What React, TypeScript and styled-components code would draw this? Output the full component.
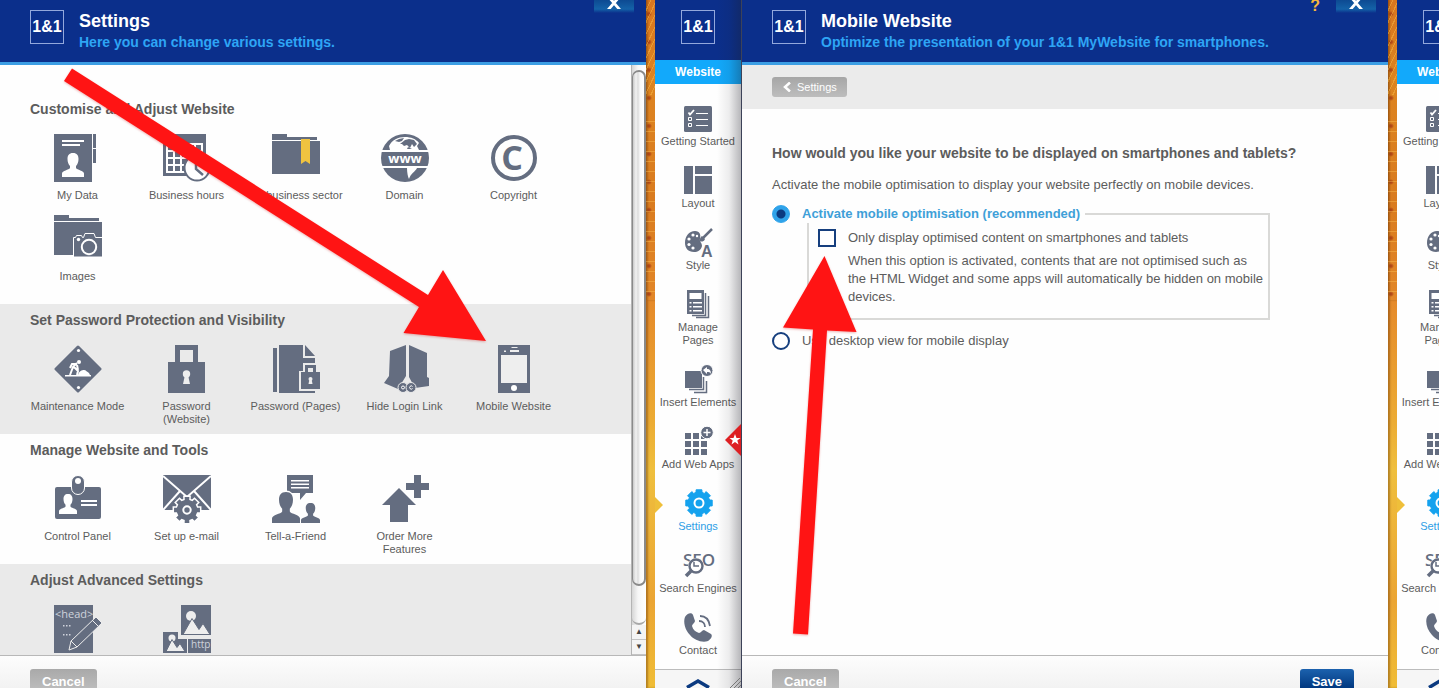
import React, { useState } from "react";
import styled, { createGlobalStyle } from "styled-components";

const navy = "#0b2f8b";
const slate = "#646d80";
const sky = "#2f9fe6";
const ink = "#5c5c5c";

const GlobalStyle = createGlobalStyle`
  *, *::before, *::after { box-sizing: border-box; }
  body {
    margin: 0;
    overflow: hidden;
    background: #ffffff;
    color: ${ink};
    font-family: "Liberation Sans", Arial, Helvetica, sans-serif;
    font-size: 13px;
  }
  button { font-family: inherit; border: 0; cursor: pointer; }
  h1, h2, p, ul { margin: 0; padding: 0; }
`;

/* ---------- page frame ---------- */

const Desktop = styled.div`
  display: flex;
  height: 100vh;
  overflow: hidden;
`;

const Panel = styled.section<{ $edge?: boolean }>`
  position: relative;
  display: flex;
  flex: 1 1 0;
  flex-direction: column;
  min-width: 0;
  border-left: ${(p) => (p.$edge ? "1px solid #3c4258" : "0")};
  background: #fefefe;
`;

const WoodStrip = styled.div`
  position: relative;
  z-index: 1;
  flex: none;
  width: 9px;
  background:
    linear-gradient(to right, rgba(90, 40, 0, 0.5), rgba(90, 40, 0, 0) 3px),
    radial-gradient(circle at 3px 50%, rgba(170, 60, 20, 0.8) 1px, transparent 3px),
    linear-gradient(#d9761f 0, #dd8420 80px, #d97b1f 200px, #e58a2a 330px, #ecab33 420px, #efbf3d 470px, #eba533 600px, #f0bd35 100%);
  background-size: 100% 100%, 9px 28px, 100% 100%;
  background-repeat: no-repeat, repeat-y, no-repeat;

  &::before {
    content: "";
    position: absolute;
    inset: 0 0 auto;
    height: 95px;
    background: repeating-linear-gradient(115deg, transparent 0 4px, rgba(255, 200, 80, 0.4) 4px 5px);
  }
  &::after {
    content: "";
    position: absolute;
    inset: 300px 0 0;
    background: linear-gradient(#e58a2a, #ecab33 120px, #efbf3d 170px, #eba533 300px, #f0bd35 100%);
    box-shadow: inset 2px 0 2px rgba(90, 40, 0, 0.4);
  }
`;

const StripLines = styled.div`
  position: absolute;
  inset: 112px 0 auto;
  height: 190px;
  background: repeating-linear-gradient(transparent 0 9px, rgba(255, 200, 90, 0.4) 9px 10px);
`;

/* ---------- header ---------- */

const Header = styled.header`
  display: flex;
  flex: none;
  align-items: flex-start;
  gap: 15px;
  height: 65px;
  padding: 10px 12px 0 30px;
  border-bottom: 3px solid #3c9ee4;
  background: ${navy};
`;

const Titles = styled.div`
  flex: 1;
  min-width: 0;
  white-space: nowrap;
`;

const Title = styled.h1`
  font-size: 18px;
  line-height: 22px;
  color: #ffffff;
`;

const Subtitle = styled.p`
  font-size: 14px;
  font-weight: bold;
  line-height: 20px;
  color: #2ea5f5;
`;

const HeaderTools = styled.div`
  display: flex;
  gap: 16px;
  margin-top: -10px;
`;

const HelpButton = styled.button`
  height: 12px;
  padding: 0;
  background: none;
  color: #f5b83d;
  font-size: 16px;
  font-weight: bold;
  line-height: 8px;
`;

const CloseButton = styled.button`
  display: flex;
  justify-content: center;
  width: 40px;
  height: 13px;
  padding: 0;
  background: linear-gradient(#0d4a92, #1462a8 70%, ${navy});
`;

const LogoBox = styled.div`
  display: flex;
  flex: none;
  align-items: center;
  justify-content: center;
  width: 34px;
  height: 34px;
  border: 1px solid #93a8dc;
  color: #ffffff;
  font-size: 16px;
  font-weight: bold;
  line-height: 32px;
`;

const Logo = () => <LogoBox>1&amp;1</LogoBox>;

const CloseGlyph = () => (
  <svg width="14" height="9" viewBox="0 0 14 9" aria-hidden="true">
    <path d="M1-4L13 10M13-4L1 10" stroke="#fff" strokeWidth="2.800" />
  </svg>
);

/* ---------- settings list ---------- */

const ScrollRow = styled.div`
  display: flex;
  flex: 1;
  min-height: 0;
`;

const Sections = styled.div`
  flex: 1;
  min-width: 0;
  overflow: hidden;
`;

const Section = styled.section<{ $shaded?: boolean; $first?: boolean }>`
  padding: ${(p) => (p.$first ? 36 : 8)}px 23px 8px;
  background: ${(p) => (p.$shaded ? "#eaeaea" : "#fefefe")};
`;

const SectionTitle = styled.h2`
  padding-left: 7px;
  font-size: 14px;
  line-height: 16px;
`;

const IconGrid = styled.div`
  display: grid;
  grid-template-columns: repeat(5, 109px);
  margin-top: 17px;
`;

const Tile = styled.button`
  display: flex;
  flex-direction: column;
  align-items: center;
  gap: 7px;
  padding: 0 6px;
  background: none;
  color: ${slate};
`;

const TileLabel = styled.span`
  min-height: 26px;
  color: ${ink};
  font-size: 11px;
  line-height: 13px;
`;

const Scrollbar = styled.div`
  display: flex;
  flex: none;
  flex-direction: column;
  width: 15px;
  padding-top: 5px;
  border-left: 1px solid #b4b4b4;
  background: linear-gradient(to right, #d6d6d6, #f6f6f6 6px, #ffffff);
`;

const Thumb = styled.div`
  flex: 1;
  border: 1px solid #8a8a8a;
  border-width: 2px 2px 2px 1px;
  border-radius: 7px;
  background: linear-gradient(to right, #c9c9c9, #f2f2f2 3px, #dcdcdc 5px, #f8f8f8 7px, #ffffff);
`;

const Track = styled.div`
  height: 39px;
  border-bottom: 2px solid #a8a8a8;
  border-radius: 0 0 7px 7px;
`;

const StepButton = styled.button`
  height: 15px;
  padding: 0;
  border-bottom: 1px solid #c4c4c4;
  background: #f4f4f4;
  color: #444444;
  font-size: 8px;
  line-height: 14px;
`;

const Footer = styled.footer`
  display: flex;
  flex: none;
  align-items: flex-start;
  justify-content: space-between;
  height: 33px;
  padding: 13px 34px 0 30px;
  border-top: 1px solid #b8b8b8;
  background: linear-gradient(#fdfdfd, #f2f2f2);
  overflow: hidden;
`;

const ActionButton = styled.button<{ $primary?: boolean }>`
  flex: none;
  height: 26px;
  padding: 0 12px;
  border-radius: 3px;
  background: ${(p) => (p.$primary ? "linear-gradient(#1c62ae, #023a82 70%)" : "linear-gradient(#a9a9a9, #c2c2c2)")};
  color: #ffffff;
  font-size: 13px;
  font-weight: bold;
  line-height: 24px;
`;

/* ---------- side rail ---------- */

const RailWindow = styled.div<{ $width: number }>`
  flex: none;
  width: ${(p) => p.$width}px;
  overflow: hidden;
`;

const Rail = styled.nav`
  position: relative;
  display: flex;
  flex-direction: column;
  width: 86px;
  height: 100%;
  background: #fefefe;

  &::after {
    content: "";
    position: absolute;
    inset: 0 0 0 auto;
    width: 24px;
    background: linear-gradient(to right, rgba(30, 30, 40, 0), rgba(30, 30, 40, 0.08) 50%, rgba(30, 30, 40, 0.32));
    pointer-events: none;
  }
`;

const RailHead = styled.div`
  display: flex;
  flex: none;
  justify-content: center;
  height: 60px;
  padding-top: 10px;
  background: ${navy};
`;

const RailBand = styled.div`
  flex: none;
  background: #12a9fb;
  color: #ffffff;
  font-size: 12px;
  font-weight: bold;
  line-height: 24px;
  text-align: center;
`;

const RailList = styled.ul`
  display: flex;
  flex: 1;
  flex-direction: column;
  gap: 18px;
  min-height: 0;
  padding-top: 20px;
  list-style: none;
`;

const RailItem = styled.li`
  position: relative;
`;

const RailLink = styled.a<{ $active?: boolean }>`
  display: flex;
  flex-direction: column;
  align-items: center;
  gap: 3px;
  color: ${(p) => (p.$active ? "#14a2ee" : slate)};
  text-decoration: none;
`;

const RailLabel = styled.span<{ $active?: boolean }>`
  color: ${(p) => (p.$active ? sky : ink)};
  font-size: 11px;
  line-height: 13px;
  text-align: center;
  white-space: pre-line;
`;

const ActiveNotch = styled.div`
  position: absolute;
  top: 8px;
  left: 0;
  border: solid transparent;
  border-width: 8px 0 8px 8px;
  border-left-color: #efbf3a;
`;

const NewRibbon = styled.svg`
  position: absolute;
  top: -3px;
  right: 0;
  z-index: 1;
`;

const RailFoot = styled.div`
  display: flex;
  flex: none;
  justify-content: center;
  height: 19px;
  padding-top: 8px;
  border-top: 1px solid #bcbcbc;
  background: #f6f6f6;
`;

const ResizeGrip = styled.svg`
  position: absolute;
  right: 0;
  bottom: 0;
  z-index: 1;
`;

/* ---------- mobile website form ---------- */

const Toolbar = styled.div`
  flex: none;
  padding: 12px 30px;
  background: #ebebeb;
`;

const BackButton = styled.button`
  display: flex;
  align-items: center;
  gap: 6px;
  height: 20px;
  padding: 0 10px 0 11px;
  border-radius: 3px;
  background: linear-gradient(#a6a6a6, #bdbdbd);
  color: #ffffff;
  font-size: 11px;
`;

const Form = styled.form`
  flex: 1;
  min-height: 0;
  padding: 36px 30px 0;
  line-height: 18px;
`;

const Question = styled.h2`
  font-size: 14px;
  line-height: 16px;
`;

const Intro = styled.p`
  margin: 15px 0 11px;
`;

const OptionGroup = styled.fieldset`
  max-width: 463px;
  margin: 0 0 12px 35px;
  padding: 6px 2px 12px 9px;
  border: 2px solid #d9d9d7;
`;

const Legend = styled.legend`
  margin-left: -46px;
  padding: 0 5px 0 0;
`;

const OptionLabel = styled.label<{ $highlight?: boolean }>`
  display: flex;
  align-items: center;
  gap: 12px;
  color: ${(p) => (p.$highlight ? "#3fa0d8" : ink)};
  font-weight: ${(p) => (p.$highlight ? "bold" : "normal")};
`;

const Radio = styled.input`
  flex: none;
  width: 18px;
  height: 18px;
  margin: 0;
  appearance: none;
  border: 2px solid #163f7e;
  border-radius: 50%;
  background: #ffffff;

  &:checked {
    border: 1px solid #2fa3ea;
    background: radial-gradient(circle, #0b3a80 4px, #2fa3ea 5px);
  }
`;

const Checkbox = styled.input`
  flex: none;
  width: 18px;
  height: 18px;
  margin: 0;
  appearance: none;
  border: 2px solid #163f7e;
  background: #ffffff;

  &:checked {
    background: #163f7e;
    box-shadow: inset 0 0 0 3px #ffffff;
  }
`;

const OptionHint = styled.p`
  padding: 5px 0 0 30px;
`;

const Pointer = styled.svg`
  position: absolute;
  top: 0;
  left: 0;
  z-index: 2;
  pointer-events: none;
  filter: drop-shadow(0 1px 1px rgba(200, 0, 0, 0.3));
`;

/* ---------- icons, 48px ---------- */

const gear = (cx: number, cy: number, outer: number, inner: number) => {
  const points: string[] = [];
  for (let i = 0; i < 8; i++) {
    const a = (i * Math.PI) / 4 - Math.PI / 2;
    [[-0.28, inner], [-0.22, outer], [0.22, outer], [0.28, inner]].forEach(([d, r]) =>
      points.push(`${(cx + r * Math.cos(a + d)).toFixed(1)} ${(cy + r * Math.sin(a + d)).toFixed(1)}`)
    );
  }
  return `M${points.join("L")}Z`;
};

const bust = (x: number, y: number, w: number, h: number, fill: string, stroke = "none") => (
  <svg x={x} y={y} width={w} height={h} viewBox="0 0 22 24" preserveAspectRatio="none" overflow="visible">
    <path
      d="M11 0c4 0 5.500 2.500 5.500 6 0 3-1 5.500-2.500 7v2c1 2 8 2.500 8 5.500V24H0v-3.500C0 17.500 7 17 8 15v-2C6.500 11.500 5.500 9 5.500 6 5.500 2.500 7 0 11 0z"
      fill={fill}
      stroke={stroke}
    />
  </svg>
);

const folder = (
  <path fill="currentColor" d="M0 0h15v3h30v3H0zM0 7h48v33H0z" />
);

const tileIcons: Record<string, React.ReactNode> = {
  data: (
    <>
      <path fill="currentColor" d="M0 0h38v48H0zM39 0h3v14h-3zM39 15h3v14h-3z" />
      <path fill="#fff" d="M8 6h22v2H8zM8 10h18v2H8z" />
      {bust(8, 19, 22, 24, "#fff")}
    </>
  ),
  hours: (
    <>
      <path fill="currentColor" d="M0 0h43v42H0z" />
      <path fill="#fff" d="M3 9h37v30H3z" />
      {[11, 18, 25, 32].map((y) =>
        [5, 12, 19, 26, 33].map((x) => <rect key={`${x}-${y}`} x={x} y={y} width="5" height="5" fill="currentColor" />)
      )}
      <circle cx="34" cy="34" r="12.500" fill="#fff" stroke="currentColor" strokeWidth="2" />
      <path d="M33 25v10l7 6" fill="none" stroke="currentColor" strokeWidth="2.500" />
    </>
  ),
  sector: (
    <>
      {folder}
      <path fill="#f0c340" d="M29 5h9v25l-4.500-3-4.500 3z" />
    </>
  ),
  images: (
    <>
      {folder}
      <path
        fill="currentColor"
        stroke="#fff"
        d="M19.500 42V22.500h2l1-2h5l1 2h1l1.500-4h9l1.500 4h7V42z"
      />
      <circle cx="35" cy="32" r="7.200" fill="none" stroke="#fff" strokeWidth="2" />
      <circle cx="24.500" cy="24.500" r="1.700" fill="#fff" />
    </>
  ),
  domain: (
    <>
      <circle cx="24" cy="24" r="24" fill="currentColor" />
      <path fill="#fff" d="M8 12C11 6 17 3 24 3c6 0 11 2 14 6l-2 3 2 4H9z" />
      <path
        fill="currentColor"
        d="M14 7l4-2 5-1-2 3-3 1zM19 10l5-4 4-1 5 1 3 4-3 3-2-3-2 4-3-3-3 1-2-2zM27 13l4 2h-5z"
      />
      <path fill="#fff" d="M0 16h48v2H0zM0 32h48v2H0z" />
      <path fill="#fff" d="M26 34h10c-2 4-6 5-8 11-1-2-2-6-2-11z" />
      <text x="24" y="29" textAnchor="middle" fill="#fff" fontFamily="Open Sans" fontWeight="bold" fontSize="13">
        www
      </text>
    </>
  ),
  copyright: (
    <>
      <circle cx="24" cy="24" r="21" fill="none" stroke="currentColor" strokeWidth="4" />
      <text x="22" y="36" textAnchor="middle" fill="currentColor" fontFamily="Open Sans" fontWeight="bold" fontSize="34">
        C
      </text>
    </>
  ),
  maintenance: (
    <>
      <path fill="currentColor" stroke="currentColor" strokeWidth="3" strokeLinejoin="round" d="M24 2l22 22-22 22L2 24z" />
      <circle cx="24.500" cy="5.500" r="1.600" fill="#fff" />
      <circle cx="24.500" cy="42.500" r="1.600" fill="#fff" />
      <path fill="#fff" d="M11 30h26v1.500H11zM24 30c1-4 4-5 6-5s3 2 5 3l1 2z" />
      <circle cx="25" cy="17" r="2" fill="#fff" />
      <path d="M23 18l-4 4-3 8M20 22l4 4-1 4M23 19l-5 0-2 4M23 20l1 5" stroke="#fff" strokeWidth="2" fill="none" />
    </>
  ),
  lock: (
    <>
      <path fill="currentColor" fillRule="evenodd" d="M12 0h23v17h7v31H5V17h7zM17 5v12h13V5z" />
      <circle cx="23.500" cy="29" r="3.700" fill="#eee" />
      <path fill="#eee" d="M22 30h3l2 9h-7z" />
    </>
  ),
  pages: (
    <>
      <path fill="currentColor" d="M1 3h4v44H1zM7 0h24v13h12v35H7zM33 0l10 11H33z" />
      <path fill="#eaeaea" d="M31 18h14v8h4v20H27V26h4z" />
      <path fill="currentColor" fillRule="evenodd" d="M33 20h11v7h4v17H29V27h4zM36 23v4h5v-4z" />
      <circle cx="38.500" cy="34" r="2" fill="#eee" />
      <path fill="#eee" d="M37.500 34h2l1 5h-4z" />
    </>
  ),
  hidden: (
    <>
      <path fill="currentColor" d="M25 0L9 6 8 31l-5 7 14 6 8-13zM28 0l18 8v24l2 1v8l-14 2-6-11z" />
      <circle cx="22" cy="42.500" r="5" fill="currentColor" stroke="#eaeaea" />
      <circle cx="30" cy="42.500" r="5" fill="currentColor" stroke="#eaeaea" />
      <circle cx="22" cy="42.500" r="1.500" fill="none" stroke="#fff" />
      <path d="M31.500 41.500a1.600 1.600 0 1 0 0 2" fill="none" stroke="#fff" />
    </>
  ),
  mobile: (
    <>
      <path fill="currentColor" d="M8 0h32v48H8z" />
      <path fill="#eee" d="M11 10h26v28H11zM20 5h9v2h-9zM21.500 2h6v1h-6zM14 5.500h2v1.500h-2z" />
      <circle cx="24" cy="43" r="3" fill="#fff" />
    </>
  ),
  panel: (
    <>
      <rect x="1" y="12" width="46" height="32" rx="2" fill="currentColor" />
      <rect x="17.500" y="0.500" width="13" height="19" rx="6.500" fill="currentColor" stroke="#fff" />
      <circle cx="24" cy="6" r="3" fill="#fff" />
      {bust(5, 19, 18, 20, "#fff")}
      <path fill="#fff" d="M27 25h16v2H27zM27 29h16v2H27z" />
    </>
  ),
  email: (
    <>
      <path fill="currentColor" d="M0 0h48v35H0z" />
      <path d="M0 1l24 21L48 1M0 35l17-19M48 35L31 16" fill="none" stroke="#fff" strokeWidth="2" />
      <path d={gear(24, 35, 14, 11)} fill="currentColor" stroke="#fff" strokeWidth="1.500" />
      <circle cx="24" cy="35" r="3.700" fill="none" stroke="#fff" strokeWidth="2" />
    </>
  ),
  friend: (
    <>
      <path fill="currentColor" d="M15 0h26v18h-7l-6 7v-7H15z" />
      <path fill="#fff" d="M19 5h18v1.500H19zM19 8.500h18V10H19zM19 12h18v1.500H19z" />
      <circle cx="14" cy="24" r="8.500" fill="#fff" />
      {bust(0, 17, 28, 31, "currentColor")}
      {bust(29, 28, 19, 20, "currentColor")}
    </>
  ),
  order: <path fill="currentColor" d="M18 13l17 17h-8v17H9V30H1zM33 0h7v8h8v7h-8v8h-7v-8h-8V8h8z" />,
  head: (
    <>
      <path fill="currentColor" d="M0 0h39v48H0z" />
      <text x="1" y="13" fill="#cfd3dc" fontFamily="Open Sans" fontSize="11">
        &lt;head&gt;
      </text>
      <path fill="#cfd3dc" d="M9 20h1.500v1.500H9zM12 20h1.500v1.500H12zM15 20h1.500v1.500H15zM9 29h1.500v1.500H9zM12 29h1.500v1.500H12zM15 29h1.500v1.500H15z" />
      <path fill="currentColor" stroke="#eee" d="M42 12l6 6-25 24-8 3 2-9z" />
      <path stroke="#eee" d="M17 36l6 6M38 15l6 6" />
    </>
  ),
  links: (
    <>
      <path fill="currentColor" d="M18 0h30v30H18zM0 27h15v21H0zM25 34h23v14H25zM15 34h9v14h-9z" />
      <path stroke="#eee" d="M24.500 34v14" />
      <circle cx="28" cy="11" r="5" fill="#eee" />
      <path fill="#eee" stroke="currentColor" d="M20 29.500l9-16 7 11 4-6 7 11z" />
      <circle cx="9" cy="33" r="3.500" fill="#eee" />
      <path fill="#eee" stroke="currentColor" d="M3 46.500l6-12 5 8 3-4 5 8z" />
      <text x="28" y="43" fill="#cfd3dc" fontFamily="Open Sans" fontSize="10">
        http:
      </text>
    </>
  ),
};

const TileIcon = ({ name }: { name: string }) => (
  <svg width="48" height="48" viewBox="0 0 48 48" aria-hidden="true">
    {tileIcons[name]}
  </svg>
);

/* ---------- icons, 28px ---------- */

const railIcons: Record<string, React.ReactNode> = {
  started: (
    <>
      <rect y="2" width="28" height="26" rx="1.500" fill="currentColor" />
      <path d="M4.500 8.500l1.500 2 4-4.500" fill="none" stroke="#fff" strokeWidth="1.800" />
      <path d="M4.500 13.500h3v3h-3zM4.500 19.500h3v3h-3zM12 9.500h12M12 15.500h12M12 21.500h12" fill="none" stroke="#fff" />
    </>
  ),
  layout: <path fill="currentColor" d="M0 0h9v28H0zM11 0h17v8H11zM11 10h17v18H11z" />,
  style: (
    <>
      <path fill="currentColor" d="M11 3c5 0 6 4 5 8-1 3 2 3 2 7-1 4-4 6-8 6C4 24 1 20 1 15 1 8 5 3 11 3z" />
      <g fill="#fff">
        <circle cx="9" cy="7" r="1.600" />
        <circle cx="5" cy="11" r="1.600" />
        <circle cx="5" cy="16.500" r="1.600" />
        <circle cx="9" cy="20" r="1.600" />
        <circle cx="13" cy="8" r="1.200" />
      </g>
      <path stroke="#fff" strokeWidth="5" d="M28 1L18 11" />
      <path stroke="currentColor" strokeWidth="2.500" d="M28 1l-9 9" />
      <path fill="currentColor" d="M18 8l3 3c-1 3-4 3-6 2 1-1 1-4 3-5z" />
      <text x="17" y="29" fill="currentColor" fontFamily="Liberation Sans" fontWeight="bold" fontSize="16">
        A
      </text>
    </>
  ),
  manage: (
    <>
      <path fill="currentColor" d="M3 0h17v24H3z" />
      <path fill="#fff" d="M5.500 3h12v6h-12zM5.500 12h2v1.500h-2zM9 12h9v1.500H9zM5.500 16h2v1.500h-2zM9 16h9v1.500H9zM5.500 20h2v1.500h-2zM9 20h9v1.500H9z" />
      <path d="M8 25.500h13.500V3M12 27.500h12.500V6" fill="none" stroke="currentColor" strokeWidth="1.500" />
    </>
  ),
  insert: (
    <>
      <path fill="currentColor" d="M1 6h17v17H1z" />
      <path d="M5 24.500h14.500V12M10 27.500h12.500V16" fill="none" stroke="currentColor" strokeWidth="1.500" />
      <circle cx="23" cy="5.500" r="6" fill="currentColor" stroke="#fff" />
      <path fill="#fff" d="M19 5l4-3v2c3 0 4 2 4 5-1-2-2-2-4-2v2z" />
    </>
  ),
  apps: (
    <>
      {[6, 14, 22].map((y) =>
        [1, 9, 17].map((x) => <rect key={`${x}-${y}`} x={x} y={y} width="6" height="6" fill="currentColor" />)
      )}
      <circle cx="23" cy="5.500" r="6.300" fill="currentColor" stroke="#fff" />
      <path stroke="#fff" strokeWidth="1.500" d="M19.500 5.500h7M23 2v7" />
    </>
  ),
  settings: (
    <>
      <path d={gear(15, 14, 13.5, 11)} fill="currentColor" stroke="currentColor" strokeLinejoin="round" />
      <circle cx="15" cy="14" r="4.500" fill="none" stroke="#fff" strokeWidth="2" />
    </>
  ),
  seo: (
    <>
      <text x="-1" y="15" fill="currentColor" fontFamily="Open Sans" fontWeight="600" fontSize="17">
        SEO
      </text>
      <circle cx="12" cy="15" r="8" fill="#fff" />
      <path stroke="#fff" strokeWidth="5" d="M8 19l-6 6" />
      <circle cx="12" cy="15" r="6.500" fill="none" stroke="currentColor" strokeWidth="2.400" />
      <path stroke="currentColor" strokeWidth="3.500" d="M8 19l-6 6" />
      <path stroke="currentColor" strokeWidth="1.500" fill="none" d="M10 11v4h5" />
    </>
  ),
  contact: (
    <>
      <path
        fill="currentColor"
        d="M1 4C3 0 8-1 9 2l2 6c0 2-3 3-3 5 1 4 4 6 7 7 2 0 3-3 5-3l7 4c2 2 0 5-3 7-6 2-14-1-18-6C1 17-1 9 1 4z"
      />
      <path d="M15 8c4 0 6 3 6 6M16 3c6 0 9 4 10 10" fill="none" stroke="currentColor" strokeWidth="1.800" />
    </>
  ),
};

const RailIcon = ({ name }: { name: string }) => (
  <svg width="28" height="28" viewBox="0 0 28 28" overflow="visible" aria-hidden="true">
    {railIcons[name]}
  </svg>
);

/* ---------- content ---------- */

const sections = [
  {
    title: "Customise and Adjust Website",
    tiles: [
      ["data", "My Data"],
      ["hours", "Business hours"],
      ["sector", "My business sector"],
      ["domain", "Domain"],
      ["copyright", "Copyright"],
      ["images", "Images"],
    ],
  },
  {
    title: "Set Password Protection and Visibility",
    tiles: [
      ["maintenance", "Maintenance Mode"],
      ["lock", "Password (Website)"],
      ["pages", "Password (Pages)"],
      ["hidden", "Hide Login Link"],
      ["mobile", "Mobile Website"],
    ],
  },
  {
    title: "Manage Website and Tools",
    tiles: [
      ["panel", "Control Panel"],
      ["email", "Set up e-mail"],
      ["friend", "Tell-a-Friend"],
      ["order", "Order More Features"],
    ],
  },
  {
    title: "Adjust Advanced Settings",
    tiles: [
      ["head", ""],
      ["links", ""],
    ],
  },
];

const railItems = [
  ["started", "Getting Started"],
  ["layout", "Layout"],
  ["style", "Style"],
  ["manage", "Manage\nPages"],
  ["insert", "Insert Elements"],
  ["apps", "Add Web Apps"],
  ["settings", "Settings"],
  ["seo", "Search Engines"],
  ["contact", "Contact"],
];

const SideRail = ({ width }: { width: number }) => (
  <RailWindow $width={width}>
    <Rail>
      <RailHead>
        <Logo />
      </RailHead>
      <RailBand>Website</RailBand>
      <RailList>
        {railItems.map(([icon, label]) => {
          const active = icon === "settings";
          return (
            <RailItem key={icon}>
              {active && <ActiveNotch />}
              <RailLink href={`#${icon}`} $active={active}>
                <RailIcon name={icon} />
                <RailLabel $active={active}>{label}</RailLabel>
              </RailLink>
              {icon === "apps" && (
                <NewRibbon width="16" height="32" viewBox="0 0 16 32" aria-hidden="true">
                  <path fill="#dd1f22" d="M16 0v32L0 16z" />
                  <path fill="#fff" d="M10 10l1.500 4h4l-3.200 2.500 1.200 4-3.500-2.400-3.500 2.400 1.200-4L4.500 14h4z" />
                </NewRibbon>
              )}
            </RailItem>
          );
        })}
      </RailList>
      <RailFoot>
        <svg width="24" height="11" viewBox="0 0 24 11" aria-hidden="true">
          <path d="M1 9.500L12 3l11 6.500" fill="none" stroke="#0b3a80" strokeWidth="3.500" />
        </svg>
      </RailFoot>
      <ResizeGrip width="12" height="10" viewBox="0 0 12 10" aria-hidden="true">
        <path d="M1 10L11 0M5 10l7-7M9 10l3-3" stroke="#777" />
      </ResizeGrip>
    </Rail>
  </RailWindow>
);

const Wood = () => (
  <WoodStrip>
    <StripLines />
  </WoodStrip>
);

const SettingsPanel = () => (
  <Panel>
    <Header>
      <Logo />
      <Titles>
        <Title>Settings</Title>
        <Subtitle>Here you can change various settings.</Subtitle>
      </Titles>
      <HeaderTools>
        <CloseButton aria-label="Close">
          <CloseGlyph />
        </CloseButton>
      </HeaderTools>
    </Header>
    <ScrollRow>
      <Sections>
        {sections.map((section, i) => (
          <Section key={section.title} $first={i === 0} $shaded={i % 2 === 1}>
            <SectionTitle>{section.title}</SectionTitle>
            <IconGrid>
              {section.tiles.map(([icon, label]) => (
                <Tile key={icon} type="button">
                  <TileIcon name={icon} />
                  <TileLabel>{label}</TileLabel>
                </Tile>
              ))}
            </IconGrid>
          </Section>
        ))}
      </Sections>
      <Scrollbar>
        <Thumb />
        <Track />
        <StepButton aria-label="Scroll up">▲</StepButton>
        <StepButton aria-label="Scroll down">▼</StepButton>
      </Scrollbar>
    </ScrollRow>
    <Footer>
      <ActionButton>Cancel</ActionButton>
    </Footer>
    <Pointer width="500" height="360" viewBox="0 0 500 360" aria-hidden="true">
      <path fill="#ff1414" d="M72 68.500L428 295l15-25 43 71-82.500-8L419 307 64 81z" />
    </Pointer>
  </Panel>
);

const MobilePanel = () => {
  const [mode, setMode] = useState("optimised");
  const [only, setOnly] = useState(false);
  return (
    <Panel $edge>
      <Header>
        <Logo />
        <Titles>
          <Title>Mobile Website</Title>
          <Subtitle>Optimize the presentation of your 1&amp;1 MyWebsite for smartphones.</Subtitle>
        </Titles>
        <HeaderTools>
          <HelpButton aria-label="Help">?</HelpButton>
          <CloseButton aria-label="Close">
            <CloseGlyph />
          </CloseButton>
        </HeaderTools>
      </Header>
      <Toolbar>
        <BackButton>
          <svg width="8" height="10" viewBox="0 0 8 10" aria-hidden="true">
            <path d="M7 0.500L2 5l5 4.500" fill="none" stroke="#fff" strokeWidth="2.500" />
          </svg>
          Settings
        </BackButton>
      </Toolbar>
      <Form>
        <Question>How would you like your website to be displayed on smartphones and tablets?</Question>
        <Intro>Activate the mobile optimisation to display your website perfectly on mobile devices.</Intro>
        <OptionGroup>
          <Legend>
            <OptionLabel $highlight>
              <Radio
                type="radio"
                name="mode"
                checked={mode === "optimised"}
                onChange={() => setMode("optimised")}
              />
              Activate mobile optimisation (recommended)
            </OptionLabel>
          </Legend>
          <OptionLabel>
            <Checkbox type="checkbox" checked={only} onChange={(e) => setOnly(e.target.checked)} />
            Only display optimised content on smartphones and tablets
          </OptionLabel>
          <OptionHint>
            When this option is activated, contents that are not optimised such as the HTML Widget and some apps will
            automatically be hidden on mobile devices.
          </OptionHint>
        </OptionGroup>
        <OptionLabel>
          <Radio type="radio" name="mode" checked={mode === "desktop"} onChange={() => setMode("desktop")} />
          Use desktop view for mobile display
        </OptionLabel>
      </Form>
      <Footer>
        <ActionButton>Cancel</ActionButton>
        <ActionButton $primary>Save</ActionButton>
      </Footer>
      <Pointer width="130" height="650" viewBox="0 0 130 650" aria-hidden="true">
        <path fill="#ff1414" d="M82.500 256l32 76-29.500-1.500L66 634.500l-15-1L71 329.500l-30-2z" />
      </Pointer>
    </Panel>
  );
};

export default function App() {
  return (
    <>
      <GlobalStyle />
      <Desktop>
        <SettingsPanel />
        <Wood />
        <SideRail width={86} />
        <MobilePanel />
        <Wood />
        <SideRail width={42} />
      </Desktop>
    </>
  );
}
